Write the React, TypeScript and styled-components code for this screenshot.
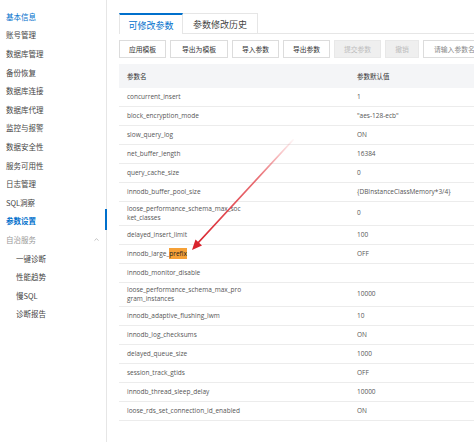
import React from 'react';
import styled, { createGlobalStyle, css } from 'styled-components';
import { ChevronUp } from 'lucide-react';

const Global = createGlobalStyle`
  html, body { margin: 0; padding: 0; overflow: hidden; background: #fff; }
  body { font-family: "Open Sans", "Noto Sans CJK SC", sans-serif; color: #444; }
  * { box-sizing: border-box; }
`;

const Page = styled.div`
  position: relative;
  display: flex;
  width: 474px;
  height: 442px;
  overflow: hidden;
  background: #fff;
`;

const Sidebar = styled.nav`
  width: 107px;
  flex: none;
  border-right: 1px solid #e6e6e6;
  padding-top: 7px;
`;

const NavItem = styled.div<{ $active?: boolean; $sub?: boolean; $muted?: boolean; $blue?: boolean }>`
  position: relative;
  display: flex;
  align-items: center;
  justify-content: space-between;
  height: 18.6px;
  padding-left: ${p => (p.$sub ? 16 : 6)}px;
  padding-right: 6px;
  font-family: "Noto Sans CJK SC", sans-serif;
  font-size: 7.5px;
  color: ${p => (p.$blue || p.$active ? '#0070cc' : p.$muted ? '#999' : '#444')};
  font-weight: ${p => (p.$active ? 700 : 400)};
  ${p =>
    p.$active &&
    css`
      &::after {
        content: '';
        position: absolute;
        right: -1px;
        top: -3px;
        bottom: 0;
        width: 2px;
        background: #0070cc;
      }
    `}
`;

const Main = styled.main`
  flex: 1;
  min-width: 0;
  padding: 13px 0 0 12px;
  overflow: hidden;
`;

const TabBar = styled.div`
  display: flex;
  align-items: flex-start;
  height: 21px;
  border-bottom: 1px solid #e6e6e6;
`;

const Tab = styled.div<{ $active?: boolean; $w: number }>`
  width: ${p => p.$w}px;
  height: 21px;
  display: flex;
  align-items: center;
  justify-content: center;
  padding-top: 2px;
  font-family: "Noto Sans CJK SC", sans-serif;
  font-size: 9px;
  background: #fff;
  border-right: 1px solid #e6e6e6;
  ${p =>
    p.$active
      ? css`
          border-top: 2px solid #0070cc;
          border-left: 1px solid #e6e6e6;
          color: #0070cc;
          position: relative;
          z-index: 1;
        `
      : css`
          border-top: 1px solid #e6e6e6;
          height: 20px;
          color: #444;
        `}
`;

const Toolbar = styled.div`
  display: flex;
  gap: 4px;
  margin-top: 6px;
  height: 18px;
`;

const Btn = styled.div<{ $w: number; $disabled?: boolean }>`
  width: ${p => p.$w}px;
  flex: none;
  height: 18px;
  display: flex;
  align-items: center;
  justify-content: center;
  font-family: "Noto Sans CJK SC", sans-serif;
  font-size: 6.8px;
  border: 1px solid ${p => (p.$disabled ? '#e8e8e8' : '#dcdcdc')};
  background: ${p => (p.$disabled ? '#efefef' : '#fff')};
  color: ${p => (p.$disabled ? '#bdbdbd' : '#333')};
`;

const Search = styled.div`
  width: 80px;
  flex: none;
  height: 18px;
  display: flex;
  align-items: center;
  padding-left: 10px;
  font-family: "Noto Sans CJK SC", sans-serif;
  font-size: 6.8px;
  border: 1px solid #dcdcdc;
  color: #888;
  white-space: nowrap;
`;

const Table = styled.div`
  margin-top: 6px;
  width: 380px;
`;

const Row = styled.div<{ $head?: boolean; $tall?: boolean }>`
  display: grid;
  grid-template-columns: 230px 1fr;
  height: ${p => (p.$head ? 24 : p.$tall ? 24 : 19)}px;
  background: ${p => (p.$head ? '#f4f5f7' : '#fff')};
  border-bottom: ${p => (p.$head ? 'none' : '1px solid #ececec')};
`;

const Cell = styled.div<{ $head?: boolean }>`
  display: flex;
  flex-direction: column;
  justify-content: center;
  padding-left: 8px;
  font-size: 6.5px;
  line-height: 8.9px;
  color: ${p => (p.$head ? '#333' : '#555')};
  font-family: ${p => (p.$head ? '"Noto Sans CJK SC", sans-serif' : '"Open Sans", "Noto Sans CJK SC", sans-serif')};
  white-space: nowrap;
`;

const Line = styled.span`
  display: block;
  height: 8.9px;
  line-height: 8.9px;
`;

const Mark = styled.span`
  background: #f6a137;
  color: #222;
  padding: 1px 0;
`;

const ArrowLayer = styled.svg`
  position: absolute;
  left: 0;
  top: 0;
  pointer-events: none;
`;

type Param = { name: React.ReactNode; value: string; tall?: boolean };

const params: Param[] = [
  { name: 'concurrent_insert', value: '1' },
  { name: 'block_encryption_mode', value: '"aes-128-ecb"' },
  { name: 'slow_query_log', value: 'ON' },
  { name: 'net_buffer_length', value: '16384' },
  { name: 'query_cache_size', value: '0' },
  { name: 'innodb_buffer_pool_size', value: '{DBInstanceClassMemory*3/4}' },
  {
    name: (
      <>
        <Line>loose_performance_schema_max_soc</Line>
        <Line>ket_classes</Line>
      </>
    ),
    value: '0',
    tall: true,
  },
  { name: 'delayed_insert_limit', value: '100' },
  {
    name: (
      <span>
        innodb_large_<Mark>prefix</Mark>
      </span>
    ),
    value: 'OFF',
  },
  { name: 'innodb_monitor_disable', value: '' },
  {
    name: (
      <>
        <Line>loose_performance_schema_max_pro</Line>
        <Line>gram_instances</Line>
      </>
    ),
    value: '10000',
    tall: true,
  },
  { name: 'innodb_adaptive_flushing_lwm', value: '10' },
  { name: 'innodb_log_checksums', value: 'ON' },
  { name: 'delayed_queue_size', value: '1000' },
  { name: 'session_track_gtids', value: 'OFF' },
  { name: 'innodb_thread_sleep_delay', value: '10000' },
  { name: 'loose_rds_set_connection_id_enabled', value: 'ON' },
];

const nav: { label: string; blue?: boolean; active?: boolean; sub?: boolean; muted?: boolean; chevron?: boolean }[] = [
  { label: '基本信息', blue: true },
  { label: '账号管理' },
  { label: '数据库管理' },
  { label: '备份恢复' },
  { label: '数据库连接' },
  { label: '数据库代理' },
  { label: '监控与报警' },
  { label: '数据安全性' },
  { label: '服务可用性' },
  { label: '日志管理' },
  { label: 'SQL洞察' },
  { label: '参数设置', active: true },
  { label: '自治服务', muted: true, chevron: true },
  { label: '一键诊断', sub: true },
  { label: '性能趋势', sub: true },
  { label: '慢SQL', sub: true },
  { label: '诊断报告', sub: true },
];

export default function App() {
  return (
    <>
      <Global />
      <Page>
        <Sidebar>
          {nav.map(n => (
            <NavItem key={n.label} $blue={n.blue} $active={n.active} $sub={n.sub} $muted={n.muted}>
              <span>{n.label}</span>
              {n.chevron && <ChevronUp size={7} strokeWidth={2} color="#999" />}
            </NavItem>
          ))}
        </Sidebar>
        <Main>
          <TabBar>
            <Tab $active $w={64}>可修改参数</Tab>
            <Tab $w={75}>参数修改历史</Tab>
          </TabBar>
          <Toolbar>
            <Btn $w={47}>应用模板</Btn>
            <Btn $w={58}>导出为模板</Btn>
            <Btn $w={47}>导入参数</Btn>
            <Btn $w={47}>导出参数</Btn>
            <Btn $w={47} $disabled>提交参数</Btn>
            <Btn $w={34} $disabled>撤销</Btn>
            <Search>请输入参数名</Search>
          </Toolbar>
          <Table>
            <Row $head>
              <Cell $head>参数名</Cell>
              <Cell $head>参数默认值</Cell>
            </Row>
            {params.map((p, i) => (
              <Row key={i} $tall={p.tall}>
                <Cell>{p.name}</Cell>
                <Cell>{p.value}</Cell>
              </Row>
            ))}
          </Table>
        </Main>
        <ArrowLayer width={474} height={442} viewBox="0 0 474 442">
          <defs>
            <linearGradient id="arrowGrad" x1="293" y1="140" x2="196" y2="245" gradientUnits="userSpaceOnUse">
              <stop offset="0" stopColor="#e8323a" stopOpacity="0.05" />
              <stop offset="0.35" stopColor="#e0343c" stopOpacity="0.7" />
              <stop offset="1" stopColor="#d9232d" stopOpacity="1" />
            </linearGradient>
          </defs>
          <line x1="293" y1="140" x2="197" y2="244" stroke="url(#arrowGrad)" strokeWidth="1.8" strokeLinecap="round" />
          <polygon points="192,250 202,245.5 195.5,239.5" fill="#d9232d" />
        </ArrowLayer>
      </Page>
    </>
  );
}
